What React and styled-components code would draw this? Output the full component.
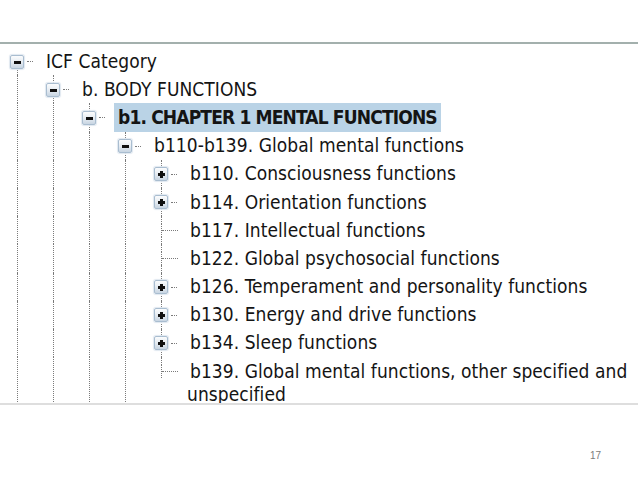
import React from "react";
import styled, { createGlobalStyle } from "styled-components";

const GlobalStyle = createGlobalStyle`
  html, body {
    margin: 0;
    padding: 0;
    background: #ffffff;
  }
  body {
    width: 638px;
    height: 478px;
    overflow: hidden;
  }
`;

const StyledSlide = styled.div`
  position: relative;
  width: 638px;
  height: 478px;
  padding-top: 42px;
  box-sizing: border-box;
  background: #fff;
`;

const StyledFrame = styled.div`
  height: 363px;
  border-top: 2px solid #a3b0ad;
  border-bottom: 2px solid #dedede;
  box-sizing: border-box;
  overflow: hidden;
  padding-top: 3px;
`;

const StyledRow = styled.div`
  display: flex;
  align-items: stretch;
`;

const StyledGuide = styled.div`
  width: 36px;
  flex: none;
  display: flex;

  &::before {
    content: "";
    margin-left: 17px;
    border-left: 1px dotted ${({ $on }) => ($on ? "#7a7a7a" : "transparent")};
  }
`;

const StyledNode = styled.div`
  width: 36px;
  flex: none;
  display: flex;
  flex-direction: column;
`;

const StyledStem = styled.div`
  margin-left: 17px;
  height: ${({ $h }) => ($h ? `${$h}px` : "auto")};
  flex: ${({ $h }) => ($h ? "none" : "1")};
  border-left: 1px dotted ${({ $on }) => ($on ? "#7a7a7a" : "transparent")};
`;

const StyledJoint = styled.div`
  height: 13px;
  display: flex;
  align-items: center;
`;

const StyledLeafJoint = styled.div`
  height: 13px;
  display: flex;
  align-items: center;
  margin-left: 17px;
  border-left: 1px dotted ${({ $on }) => ($on ? "#7a7a7a" : "transparent")};
`;

const StyledDash = styled.div`
  width: ${({ $w }) => $w}px;
  margin-left: ${({ $ml }) => $ml}px;
  border-top: 1px dotted #7a7a7a;
`;

const StyledIcon = styled.div`
  width: 12px;
  height: 12px;
  margin-left: 10px;
  border: 1px solid #a9bdd0;
  border-radius: 2px;
  background: linear-gradient(to bottom, #fbfcfd 0%, #e6ecf2 50%, #c8d5e2 100%);
  box-shadow: 0 0 1px 1px #e0e8f0;
  position: relative;
  flex: none;

  &::before {
    content: "";
    position: absolute;
    left: 3px;
    top: 5px;
    width: 7px;
    height: 3px;
    background: #101010;
  }

  &::after {
    content: "";
    display: ${({ $plus }) => ($plus ? "block" : "none")};
    position: absolute;
    left: 5px;
    top: 3px;
    width: 3px;
    height: 7px;
    background: #101010;
  }
`;

const StyledLabel = styled.div`
  font-family: "DejaVu Sans Condensed", "DejaVu Sans", sans-serif;
  font-stretch: condensed;
  font-size: 19px;
  letter-spacing: ${({ $hl }) => ($hl ? "-0.85px" : "0.06px")};
  color: #141414;
  line-height: 23px;
  padding: 2.6px 4px;
  margin-left: 6px;
  font-weight: ${({ $hl }) => ($hl ? "bold" : "normal")};
  background: ${({ $hl }) => ($hl ? "#bad3e6" : "transparent")};
  white-space: nowrap;
  align-self: flex-start;
`;

const StyledPageNo = styled.div`
  position: absolute;
  left: 590px;
  top: 450px;
  font-family: "Liberation Sans", Arial, sans-serif;
  font-size: 10px;
  color: #7c7c7c;
`;

// guides: which ancestor columns carry a line; up/down: stem around the node
const rows = [
  { guides: [], kind: "minus", up: false, down: true, text: "ICF Category" },
  { guides: [1], kind: "minus", up: true, down: true, text: "b. BODY FUNCTIONS" },
  { guides: [1, 1], kind: "minus", up: true, down: true, text: "b1. CHAPTER 1 MENTAL FUNCTIONS", hl: true },
  { guides: [1, 1, 1], kind: "minus", up: true, down: true, text: "b110-b139. Global mental functions" },
  { guides: [1, 1, 1, 1], kind: "plus", up: true, down: true, text: "b110. Consciousness functions" },
  { guides: [1, 1, 1, 1], kind: "plus", up: true, down: true, text: "b114. Orientation functions" },
  { guides: [1, 1, 1, 1], kind: "leaf", up: true, down: true, text: "b117. Intellectual functions" },
  { guides: [1, 1, 1, 1], kind: "leaf", up: true, down: true, text: "b122. Global psychosocial functions" },
  { guides: [1, 1, 1, 1], kind: "plus", up: true, down: true, text: "b126. Temperament and personality functions" },
  { guides: [1, 1, 1, 1], kind: "plus", up: true, down: true, text: "b130. Energy and drive functions" },
  { guides: [1, 1, 1, 1], kind: "plus", up: true, down: true, text: "b134. Sleep functions" },
  {
    guides: [1, 1, 1, 1],
    kind: "leaf",
    up: true,
    down: false,
    text: ["b139. Global mental functions, other specified and", "unspecified"],
  },
];

const TreeRow = ({ row }) => (
  <StyledRow>
    {row.guides.map((g, i) => (
      <StyledGuide key={i} $on={!!g} />
    ))}
    <StyledNode>
      <StyledStem $h={8} $on={row.up} />
      {row.kind === "leaf" ? (
        <StyledLeafJoint $on>
          <StyledDash $w={16} $ml={0} />
        </StyledLeafJoint>
      ) : (
        <StyledJoint>
          <StyledIcon $plus={row.kind === "plus"} />
          <StyledDash $w={6} $ml={3} />
        </StyledJoint>
      )}
      <StyledStem $on={row.down} />
    </StyledNode>
    <StyledLabel $hl={row.hl}>
      {Array.isArray(row.text) ? (
        <>
          {row.text[0]}
          <br />
          <span style={{ marginLeft: "-3px" }}>{row.text[1]}</span>
        </>
      ) : (
        row.text
      )}
    </StyledLabel>
  </StyledRow>
);

const App = () => (
  <>
    <GlobalStyle />
    <StyledSlide>
      <StyledFrame>
        {rows.map((row, i) => (
          <TreeRow key={i} row={row} />
        ))}
      </StyledFrame>
      <StyledPageNo>17</StyledPageNo>
    </StyledSlide>
  </>
);

export default App;
